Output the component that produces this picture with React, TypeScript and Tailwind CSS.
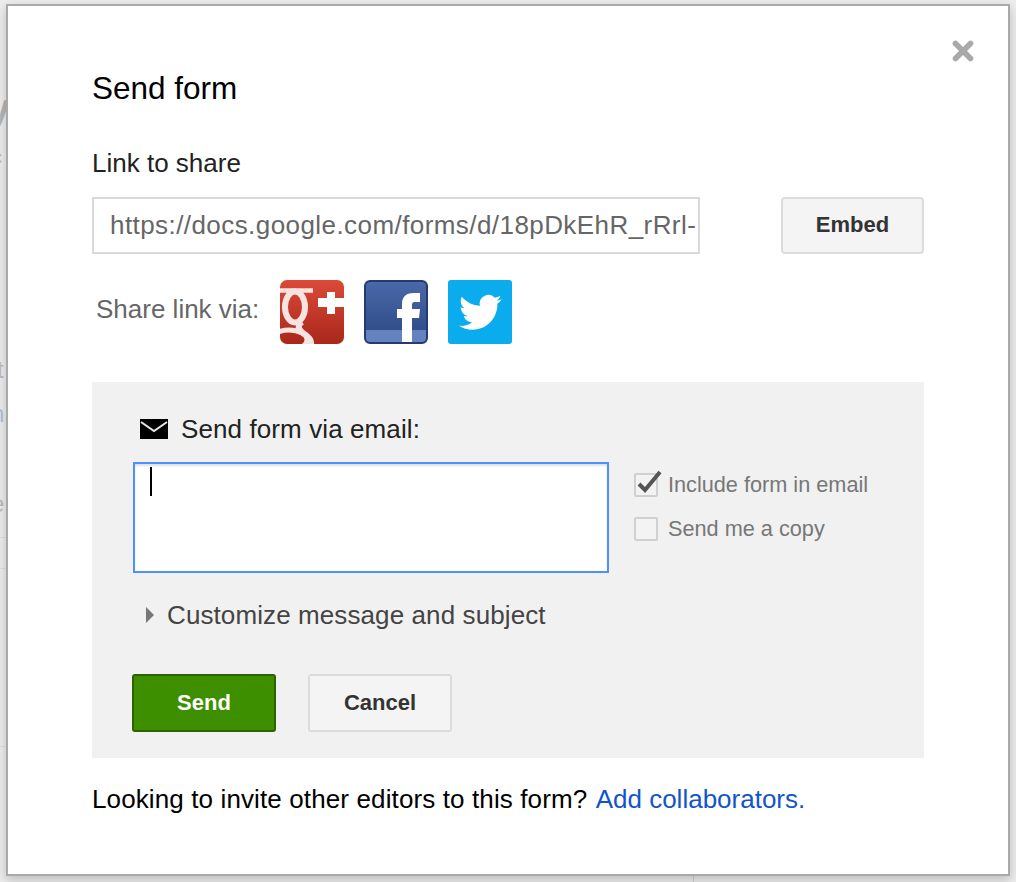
import { X } from "lucide-react";

function GooglePlusIcon() {
  return (
    <svg width="64" height="64" viewBox="0 0 64 64" className="shrink-0">
      <defs>
        <linearGradient id="gplus" x1="0" y1="0" x2="0" y2="1">
          <stop offset="0" stopColor="#dc4a38" />
          <stop offset="1" stopColor="#a9271b" />
        </linearGradient>
        <clipPath id="gclip">
          <rect width="64" height="64" rx="7" />
        </clipPath>
      </defs>
      <rect width="64" height="64" rx="7" fill="url(#gplus)" />
      <g clipPath="url(#gclip)" fill="none" stroke="#f7e4e0" strokeWidth="6">
        <ellipse cx="15" cy="27" rx="10" ry="15.5" />
        <path d="M0 10.5H33" strokeWidth="4.5" />
        <path d="M22 42c-5 4-4 7 1 11 5 3 9 7 8 12" />
        <ellipse cx="9" cy="60" rx="18" ry="10" strokeWidth="5" />
      </g>
      <path d="M47 12h8v6h9v9h-9v7h-8v-7H38v-9h9z" fill="#fff" />
    </svg>
  );
}

function FacebookIcon() {
  return (
    <svg width="64" height="64" viewBox="0 0 64 64" className="shrink-0">
      <defs>
        <linearGradient id="fb" x1="0" y1="0" x2="0" y2="1">
          <stop offset="0" stopColor="#4a69a8" />
          <stop offset="1" stopColor="#2c4784" />
        </linearGradient>
        <clipPath id="fbclip">
          <rect x="1" y="1" width="62" height="62" rx="5" />
        </clipPath>
      </defs>
      <rect x="1" y="1" width="62" height="62" rx="5" fill="url(#fb)" />
      <rect x="1" y="50" width="62" height="13" fill="#6482bf" clipPath="url(#fbclip)" />
      <path
        d="M38 63V38h-5v-9h5v-5c0-8 5-11 12-11h6v9h-5c-3 0-3 2-3 4v3h8l-1 9h-7v25z"
        fill="#fff"
      />
      <rect x="1" y="1" width="62" height="62" rx="5" fill="none" stroke="#243a70" strokeWidth="2" />
    </svg>
  );
}

function TwitterIcon() {
  return (
    <svg width="64" height="64" viewBox="0 0 64 64" className="shrink-0">
      <rect width="64" height="64" rx="3" fill="#0bacee" />
      <g transform="translate(11 11) scale(1.78)">
        <path
          fill="#fff"
          d="M23.953 4.57a10 10 0 01-2.825.775 4.958 4.958 0 002.163-2.723c-.951.555-2.005.959-3.127 1.184a4.92 4.92 0 00-8.384 4.482C7.69 8.095 4.067 6.13 1.64 3.162a4.822 4.822 0 00-.666 2.475c0 1.71.87 3.213 2.188 4.096a4.904 4.904 0 01-2.228-.616v.06a4.923 4.923 0 003.946 4.827 4.996 4.996 0 01-2.212.085 4.936 4.936 0 004.604 3.417 9.867 9.867 0 01-6.102 2.105c-.39 0-.779-.023-1.17-.067a13.995 13.995 0 007.557 2.209c9.053 0 13.998-7.496 13.998-13.985 0-.21 0-.42-.015-.63A9.935 9.935 0 0024 4.59z"
        />
      </g>
    </svg>
  );
}

function MailIcon() {
  return (
    <svg width="28" height="20" viewBox="0 0 28 20" className="shrink-0">
      <rect width="28" height="20" fill="#000" />
      <path d="M1 3l13 9 13-9" fill="none" stroke="#e8e8e8" strokeWidth="2" />
    </svg>
  );
}

function CheckOption({ label, checked }: { label: string; checked?: boolean }) {
  return (
    <label className="flex items-center gap-[10px] h-6 text-[21.7px] text-[#777]">
      <span className="relative w-6 h-6 border-2 border-[#d0d0d0] bg-[#f3f3f3] rounded-[2px]">
        {checked && (
          <svg width="28" height="28" viewBox="0 0 28 28" className="absolute -top-[6px] -left-[1px]">
            <path d="M4 15l6 6L25 3" fill="none" stroke="#555" strokeWidth="4" />
          </svg>
        )}
      </span>
      {label}
    </label>
  );
}

export default function App() {
  return (
    <div
      className="relative h-[882px] w-[1016px] overflow-hidden bg-[#ececec] pt-1 pl-1.5"
      style={{ fontFamily: '"Liberation Sans", Arial, sans-serif' }}
    >
      {/* page behind the dialog */}
      <span className="absolute -left-[12px] top-[88px] text-[40px] font-bold leading-none text-[#b5b5b5]">y</span>
      <span className="absolute -left-[8px] top-[147px] text-[20px] leading-none text-[#bbb]">c</span>
      <span className="absolute -left-[3px] top-[358px] text-[24px] leading-none text-[#bbb]">t</span>
      <span className="absolute -left-[9px] top-[402px] text-[24px] leading-none text-[#b5c0dd]">n</span>
      <span className="absolute -left-[9px] top-[492px] text-[24px] leading-none text-[#bbb]">e</span>
      <span className="absolute left-0 top-[537px] w-[6px] h-px bg-[#dedede]" />
      <span className="absolute left-0 top-[568px] w-[6px] h-px bg-[#dedede]" />
      <span className="absolute left-0 top-[746px] w-[6px] h-px bg-[#dedede]" />
      <span className="absolute left-[693px] top-[876px] w-px h-[6px] bg-[#cfcfcf]" />

      <div className="relative w-[1004px] h-[872px] bg-white border-2 border-[#a9a9a9] shadow-[0_4px_10px_rgba(0,0,0,0.2)] pl-[84px] pr-[84px] pt-[63px]">
        <X
          className="absolute right-[30px] top-[30px] text-[#a9a9a9]"
          size={30}
          strokeWidth={4.5}
        />

        <h1 className="text-[31.5px] leading-[38px] text-black">Send form</h1>

        <div className="mt-[41px] text-[26px] leading-[30px] text-[#222]">Link to share</div>

        <div className="mt-[19px] flex justify-between">
          <div className="w-[608px] h-[57px] border-2 border-[#d9d9d9] pl-[16px] flex items-center overflow-hidden whitespace-nowrap text-[26px] text-[#666] tracking-[0.43px]">
            https://docs.google.com/forms/d/18pDkEhR_rRrl-
          </div>
          <button className="w-[143px] h-[57px] pb-[2px] rounded-[4px] border-2 border-[#dcdcdc] bg-[#f4f4f4] text-[22px] font-bold text-[#333]">
            Embed
          </button>
        </div>

        <div className="mt-[26px] flex items-center pl-[4px]">
          <span className="w-[184px] pb-[6px] text-[26px] text-[#666]">Share link via:</span>
          <div className="flex gap-5">
            <GooglePlusIcon />
            <FacebookIcon />
            <TwitterIcon />
          </div>
        </div>

        <section className="mt-[38px] h-[376px] bg-[#f1f1f1] pl-[40px] pt-[32px]">
          <div className="flex items-center gap-[13px] pl-[8px] h-[30px] text-[26px] text-[#222] tracking-[0.1px]">
            <MailIcon />
            Send form via email:
          </div>

          <div className="mt-[18px] flex">
            <div className="relative ml-px w-[476px] h-[111px] bg-white border-2 border-[#4d90fe] shadow-[inset_0_2px_2px_rgba(0,0,0,0.12)]">
              <span className="absolute left-[15px] top-[3px] w-[2px] h-[29px] bg-black" />
            </div>
            <div className="ml-[25px] pt-[11px] flex flex-col gap-[20px]">
              <CheckOption label="Include form in email" checked />
              <CheckOption label="Send me a copy" />
            </div>
          </div>

          <div className="mt-[26px] flex items-center h-[32px] pl-[14px] text-[26px] text-[#444] tracking-[0.1px]">
            <span className="w-0 h-0 border-y-[8px] border-y-transparent border-l-[8px] border-l-[#777]" />
            <span className="ml-[13px]">Customize message and subject</span>
          </div>

          <div className="mt-[43px] flex gap-8">
            <button className="w-[144px] h-[58px] pb-[2px] rounded-[3px] border-2 border-[#2d6200] bg-[#3d8f00] text-[22px] font-bold text-white">
              Send
            </button>
            <button className="w-[144px] h-[58px] pb-[2px] rounded-[3px] border-2 border-[#dcdcdc] bg-[#f4f4f4] text-[22px] font-bold text-[#333]">
              Cancel
            </button>
          </div>
        </section>

        <p className="mt-[26px] text-[26px] leading-[30px] text-black whitespace-nowrap tracking-[0.12px]">
          Looking to invite other editors to this form? <a className="ml-px tracking-normal text-[#1155cc]">Add collaborators.</a>
        </p>
      </div>
    </div>
  );
}
